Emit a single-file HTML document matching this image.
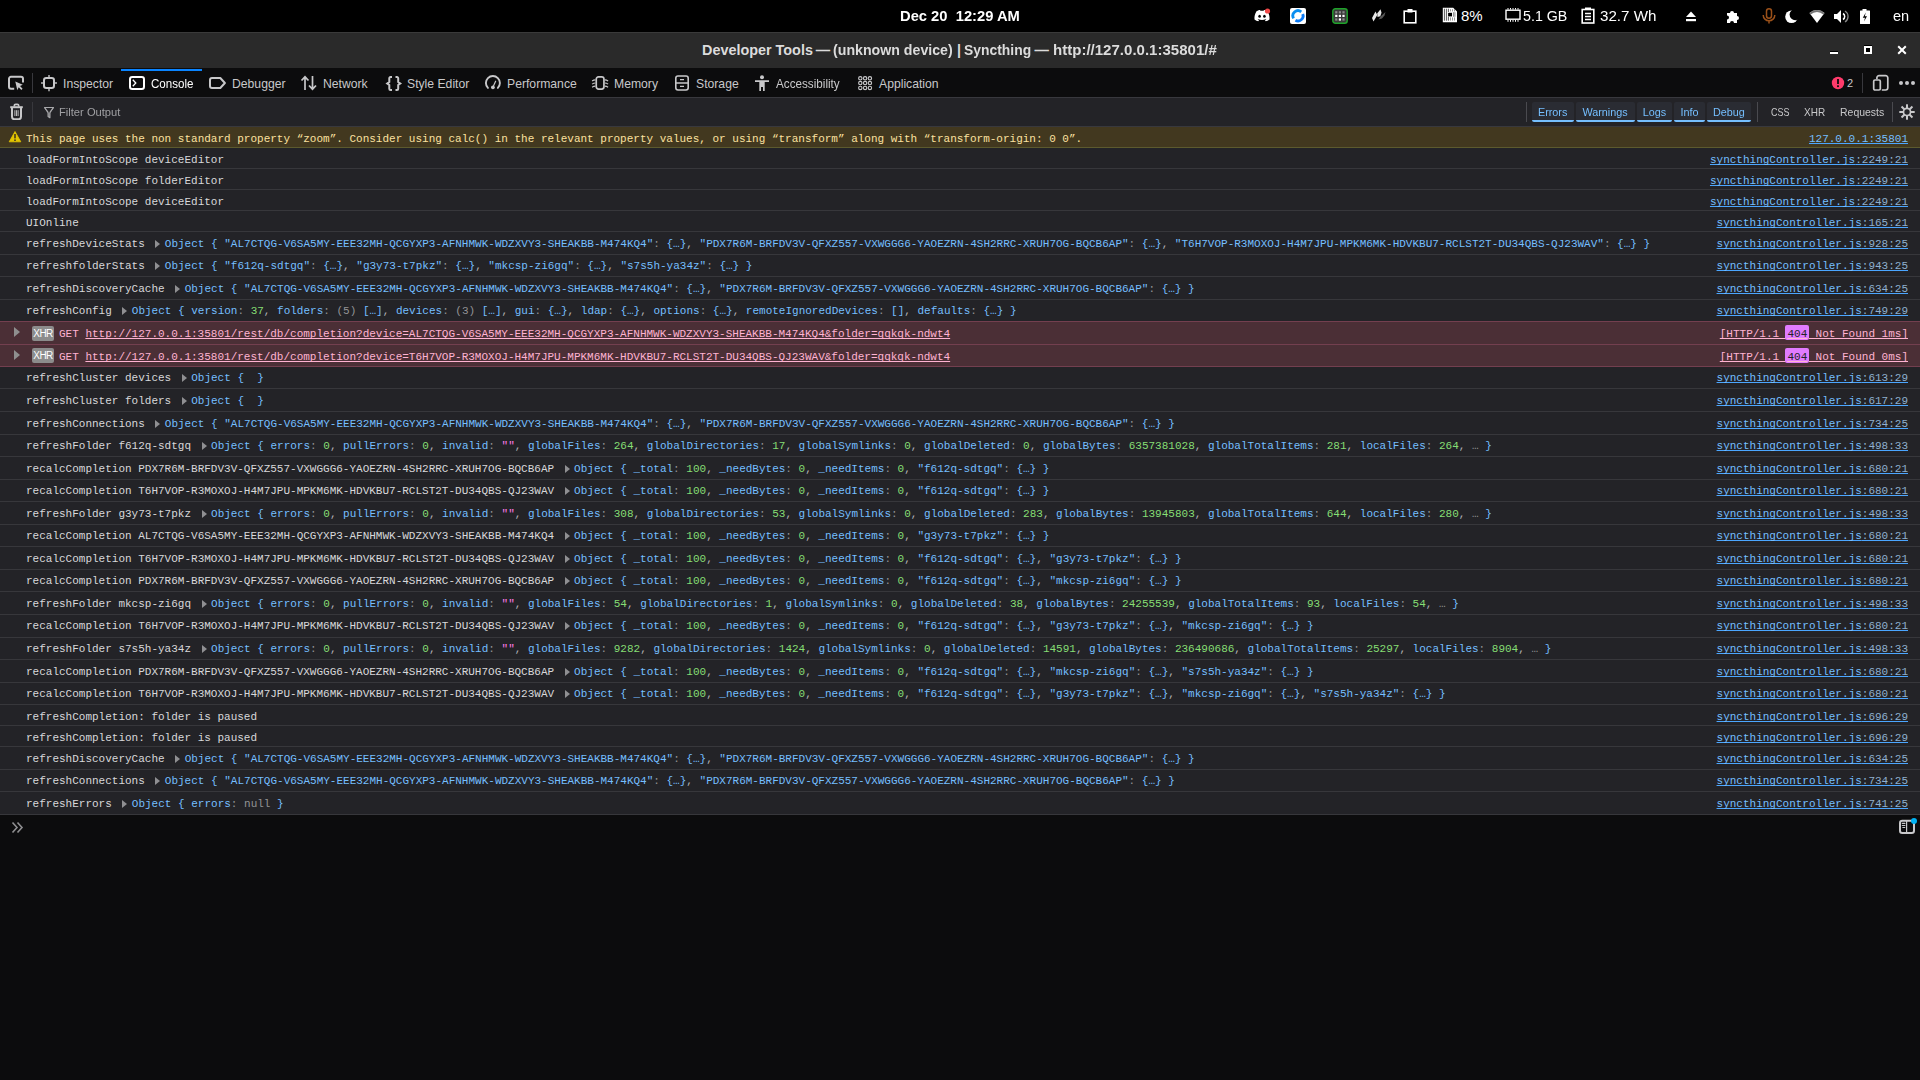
<!DOCTYPE html><html><head><meta charset="utf-8"><style>
*{margin:0;padding:0;box-sizing:border-box}
html,body{width:1920px;height:1080px;overflow:hidden;background:#0c0c0d;font-family:"Liberation Sans",sans-serif}
.abs{position:absolute}
#top{left:0;top:0;width:1920px;height:32px;background:#000}
#clock{left:899.5px;top:0;height:32px;line-height:32px;color:#fff;font-weight:bold;font-size:15px;white-space:pre;transform:scaleX(0.982);transform-origin:0 0}
#title{left:0;top:32px;width:1920px;height:36px;background:#2a2a2a;border-top:1px solid #3a3a3a}
.tt{top:-1px;height:36px;line-height:36px;color:#dcdcdc;font-weight:bold;font-size:14.4px;white-space:pre;transform-origin:0 0}
#tabs{left:0;top:68px;width:1920px;height:29px;background:#0c0c0d}
.tab{top:2px;height:28px;line-height:29px;font-size:12.2px;color:#c8c8ca;white-space:pre}
#filter{left:0;top:97px;width:1920px;height:30px;background:#232327;border-top:1px solid #38383d;border-bottom:1px solid #38383d}
.fb{font-size:11.5px;white-space:pre;line-height:14px}
.row{left:0;width:1920px;background:#232327;border-bottom:1px solid #37373b}
.msg{position:absolute;left:26px;font-family:"Liberation Mono",monospace;font-size:11px;white-space:pre;color:#d8d8da;line-height:14px}
.lnk{position:absolute;right:12px;font-family:"Liberation Mono",monospace;font-size:11px;white-space:pre;line-height:14px;text-decoration:underline;text-decoration-color:#4ba6ff;text-decoration-skip-ink:none}
.lnk b{font-weight:normal;color:#75bfff}
.lnk u{text-decoration:none;color:#8fb0cf}
i{font-style:normal}
i.o{color:#75bfff}
i.p{color:#939395}
i.c{color:#b1b1b3}
i.n{color:#86de74}
i.s{color:#ff7de9}
i.g{color:#939395}
.tw{display:inline-block;width:13.4px;height:8px;position:relative}
.tw:after{content:"";position:absolute;left:3.9px;top:1px;border-left:5px solid #8f8f92;border-top:4px solid transparent;border-bottom:4px solid transparent}
#warn{left:0;top:127px;width:1920px;height:21px;background:#42381f;border-bottom:1px solid #5c5a2e}
#warn .msg{color:#fce19f}
.traytxt{top:0;height:32px;line-height:31px;color:#fff;font-size:15px;white-space:pre;transform-origin:0 0}
.fbtn{top:4px;height:20px;background:#2a2c33;border-radius:2px;color:#75bfff;font-size:11.5px;text-align:center;line-height:21px;border-bottom:2px solid #75bfff}
.xtw{position:absolute;left:14px;top:5px;border-left:6px solid #8f8f8f;border-top:5px solid transparent;border-bottom:5px solid transparent}
.xhr{position:absolute;left:32px;top:4px;width:22px;height:15px;background:#8c8c8c;border-radius:2px;color:#fff;font-size:10px;line-height:15px;text-align:center;letter-spacing:-0.6px}
.url{text-decoration:underline;text-decoration-skip-ink:none}
.xl{color:#ffb3d2;text-decoration-color:#ffb3d2}
.b404{background:#e17bff;color:#232327;border-radius:2px;padding:3px 2.2px 0 2.2px;margin:0 -0.5px;text-decoration:underline;text-decoration-color:#ffb3d2}
#warn .lnk{color:#75bfff}
.err{background:#4b2f36;border-bottom:1px solid #733f4f}
#input{left:0;top:815px;width:1920px;height:265px;background:#0c0c0d}
</style></head><body><div id="top" class="abs"><div id="clock" class="abs">Dec 20&nbsp; 12:29 AM</div><svg class="abs" style="left:1253px;top:8px" width="19" height="15" viewBox="0 0 19 15" ><path d="M3.5 3.2C5 2.3 6.3 2 7 2l.4.8c1-.2 2.2-.2 3.2 0L11 2c.7 0 2 .3 3.5 1.2 1.6 2.6 2.3 5.3 2 8.2-1.3 1-2.6 1.6-3.8 1.9l-.8-1.3c.5-.2 1-.4 1.4-.7l-.3-.2c-2.6 1.2-5.4 1.2-8 0l-.3.2c.4.3.9.5 1.4.7l-.8 1.3C4.1 13 2.8 12.4 1.5 11.4c-.3-2.9.4-5.6 2-8.2z" fill="#fff"/><ellipse cx="6.6" cy="8.3" rx="1.3" ry="1.5" fill="#000"/><ellipse cx="11.4" cy="8.3" rx="1.3" ry="1.5" fill="#000"/><circle cx="14.5" cy="3" r="2.6" fill="#f04747"/></svg><svg class="abs" style="left:1290px;top:8px" width="16" height="16" viewBox="0 0 16 16" ><rect x="0" y="0" width="16" height="16" rx="2" fill="#fff"/><path d="M3.58 10.35A5.1 5.1 0 0 1 11.28 3.89" fill="none" stroke="#0a8ef0" stroke-width="2.8"/><path d="M12.79 6.06A5.1 5.1 0 0 1 5.45 12.22" fill="none" stroke="#0a7af5" stroke-width="2.8"/></svg><svg class="abs" style="left:1332px;top:8px" width="16" height="16" viewBox="0 0 16 16" ><rect x="0.8" y="0.8" width="14.4" height="14.4" rx="2.5" fill="#3a3a3a" stroke="#1fa32a" stroke-width="1.4"/><rect x="3.2" y="3.2" width="2.2" height="2.2" fill="#8a8a8a"/><rect x="3.2" y="6.800000000000001" width="2.2" height="2.2" fill="#fff"/><rect x="3.2" y="10.4" width="2.2" height="2.2" fill="#8a8a8a"/><rect x="6.800000000000001" y="3.2" width="2.2" height="2.2" fill="#8a8a8a"/><rect x="6.800000000000001" y="6.800000000000001" width="2.2" height="2.2" fill="#fff"/><rect x="6.800000000000001" y="10.4" width="2.2" height="2.2" fill="#fff"/><rect x="10.4" y="3.2" width="2.2" height="2.2" fill="#8a8a8a"/><rect x="10.4" y="6.800000000000001" width="2.2" height="2.2" fill="#fff"/><rect x="10.4" y="10.4" width="2.2" height="2.2" fill="#8a8a8a"/></svg><svg class="abs" style="left:1371px;top:8px" width="16" height="15" viewBox="0 0 16 15" ><path d="M7.5 11.5L9.5 8.5 14.5 4 13.5 7.5 11 10.5z" fill="#555"/><path d="M2.5 13.5L1 10 4.5 3.5 6.3 7z" fill="#e8e8e8"/><path d="M6.5 9L6.3 5.2 9.5 1.2 10.5 4.8 9.3 8.3z" fill="#e8e8e8"/></svg><svg class="abs" style="left:1403px;top:8px" width="14" height="16" viewBox="0 0 14 16" ><rect x="1.2" y="3.2" width="11.6" height="11.6" fill="none" stroke="#fff" stroke-width="1.6"/><rect x="4.5" y="1" width="5" height="3.5" fill="#fff"/></svg><svg class="abs" style="left:1442px;top:7px" width="16" height="16" viewBox="0 0 16 16" ><path d="M0.8 0.8H11.2L15 4.6V15.2H0.8z" fill="#fff"/><rect x="1.9" y="1.7" width="1" height="12" fill="#5a5a5a"/><rect x="3.9" y="1.7" width="1" height="12" fill="#5a5a5a"/><rect x="5.9" y="1.7" width="1" height="12" fill="#5a5a5a"/><rect x="8.0" y="2.2" width="1" height="2.2" fill="#9a9a9a"/><rect x="8.0" y="10.4" width="1" height="3.2" fill="#9a9a9a"/><rect x="10.0" y="2.2" width="1" height="2.2" fill="#9a9a9a"/><rect x="10.0" y="10.4" width="1" height="3.2" fill="#9a9a9a"/><rect x="12.0" y="2.2" width="1" height="2.2" fill="#9a9a9a"/><rect x="12.0" y="10.4" width="1" height="3.2" fill="#9a9a9a"/><rect x="10.9" y="5.2" width="1" height="4.6" fill="#8a8a8a"/><rect x="12.4" y="5.2" width="1" height="4.6" fill="#8a8a8a"/><rect x="5.6" y="5.0" width="4.9" height="4.7" fill="#fff"/><rect x="6.1" y="5.8" width="3.9" height="3.6" fill="#000"/></svg><div class="abs traytxt" style="left:1461px">8%</div><svg class="abs" style="left:1505px;top:7px" width="16" height="16" viewBox="0 0 16 16" ><rect x="1" y="3.2" width="14" height="9" fill="none" stroke="#fff" stroke-width="1.4"/><path d="M3 1v1.6M5.5 1v1.6M8 1v1.6M10.5 1v1.6M13 1v1.6M3 13v1.8M5.5 13v1.8M8 13v1.8M10.5 13v1.8M13 13v1.8" stroke="#fff" stroke-width="1"/></svg><div class="abs traytxt" style="left:1523px;transform:scaleX(0.95)">5.1 GB</div><svg class="abs" style="left:1581px;top:7px" width="14" height="17" viewBox="0 0 14 17" ><rect x="1.2" y="2.5" width="11.6" height="13.5" fill="none" stroke="#fff" stroke-width="1.6"/><rect x="4" y="0.5" width="6" height="2" fill="#fff"/><path d="M4 6.5h6M4 9.5h6M4 12.5h6" stroke="#fff" stroke-width="1.6"/></svg><div class="abs traytxt" style="left:1600px;transform:scaleX(1.01)">32.7 Wh</div><svg class="abs" style="left:1685px;top:11px" width="12" height="11" viewBox="0 0 12 11" ><path d="M6 0.5L11 6H1z" fill="#fff"/><rect x="1" y="8" width="10" height="2.2" fill="#fff"/></svg><svg class="abs" style="left:1725px;top:8px" width="16" height="16" viewBox="0 0 16 16" ><path d="M2 5h3a2 2 0 1 1 4 0h3v3a2 2 0 1 1 0 4v3H9a2 2 0 1 0-4 0H2v-3.5a2 2 0 1 0 0-4z" fill="#fff"/></svg><svg class="abs" style="left:1762px;top:8px" width="14" height="16" viewBox="0 0 14 16" ><rect x="4.5" y="0.8" width="5" height="9.5" rx="2.5" fill="none" stroke="#9a5019" stroke-width="1.5"/><path d="M1.2 7a5.8 5.8 0 0 0 11.6 0M7 12.8V15.5" fill="none" stroke="#9a5019" stroke-width="1.5"/></svg><svg class="abs" style="left:1785px;top:9px" width="14" height="15" viewBox="0 0 14 15" ><defs><mask id="moonm"><rect width="14" height="15" fill="#fff"/><circle cx="10.2" cy="5.6" r="5.6" fill="#000"/></mask></defs><circle cx="6.5" cy="7.8" r="6.3" fill="#fff" mask="url(#moonm)"/></svg><svg class="abs" style="left:1809px;top:9px" width="16" height="15" viewBox="0 0 16 15" ><path d="M8 14L0.5 4A11 11 0 0 1 15.5 4z" fill="#fff"/><path d="M0.5 4A11 11 0 0 1 15.5 4L14.3 5.6A9 9 0 0 0 1.7 5.6z" fill="#777"/></svg><svg class="abs" style="left:1833px;top:9px" width="16" height="15" viewBox="0 0 16 15" ><path d="M1 5h3l4-4v13L4 10H1z" fill="#fff"/><path d="M10 4.5a3.5 3.5 0 0 1 0 6" fill="none" stroke="#fff" stroke-width="1.5"/><path d="M12 2a6.5 6.5 0 0 1 0 11" fill="none" stroke="#888" stroke-width="1.3"/></svg><svg class="abs" style="left:1859px;top:9px" width="12" height="15" viewBox="0 0 12 15" ><rect x="3.5" y="0" width="4" height="2" fill="#fff"/><rect x="1" y="1.5" width="10" height="13.5" rx="0.5" fill="#fff"/><path d="M6.8 3.5L3.8 8.8h2.2l-1 3.8 3-5.3H5.8z" fill="#000"/></svg><div class="abs traytxt" style="left:1892.5px;transform:scaleX(0.97)">en</div></div><div id="title" class="abs"><div class="abs tt" style="left:702.0px;transform:scaleX(1.0)">Developer Tools</div><div class="abs tt" style="left:815.8px;transform:scaleX(1.0)">—</div><div class="abs tt" style="left:833.4px;transform:scaleX(0.985)">(unknown device)</div><div class="abs tt" style="left:957.0px;transform:scaleX(1.0)">|</div><div class="abs tt" style="left:964.0px;transform:scaleX(0.965)">Syncthing</div><div class="abs tt" style="left:1034.6px;transform:scaleX(1.0)">—</div><div class="abs tt" style="left:1052.9px;transform:scaleX(1.045)">http://127.0.0.1:35801/#</div><div class="abs" style="left:1830px;top:18px;width:8px;height:1px;background:#000"></div><div class="abs" style="left:1830px;top:19px;width:8px;height:2px;background:#fff"></div><div class="abs" style="left:1864px;top:12px;width:8px;height:1px;background:#000"></div><div class="abs" style="left:1864px;top:13px;width:8px;height:8px;border:2px solid #fff;background:#000"></div><svg class="abs" style="left:1897px;top:12px" width="10" height="10" viewBox="0 0 10 10" ><path d="M1.2 1.2l7.6 7.6M8.8 1.2L1.2 8.8" stroke="#fff" stroke-width="2"/></svg></div><div id="tabs" class="abs"><div class="abs" style="left:121px;top:1px;width:81px;height:2px;background:#0a84ff"></div><svg class="abs" style="left:7px;top:7px" width="18" height="17" viewBox="0 0 18 17" ><path d="M7.2 13.8H4a2 2 0 0 1-2-2V3.8a2 2 0 0 1 2-2h10a2 2 0 0 1 2 2v3.7" fill="none" stroke="#c8c8ca" stroke-width="2"/><path d="M8.3 6.6L15.8 9.8 13 11 15.6 13.7 14.3 15 11.7 12.3 10.3 15.2z" fill="#c8c8ca"/></svg><div class="abs" style="left:32px;top:5px;width:1px;height:20px;background:#38383d"></div><svg class="abs" style="left:41px;top:7px" width="16" height="17" viewBox="0 0 16 17" ><rect x="3" y="3" width="10" height="10" rx="2.2" fill="none" stroke="#c8c8ca" stroke-width="2"/><path d="M8 0v2M8 14v2.2M0 8h2M14 8h2" stroke="#8e8e90" stroke-width="2"/></svg><div class="abs tab" style="left:63px">Inspector</div><svg class="abs" style="left:129px;top:8px" width="16" height="14" viewBox="0 0 16 14" ><rect x="1" y="1" width="14" height="12" rx="2.3" fill="none" stroke="#fff" stroke-width="2"/><path d="M3.8 3.8l3 3.2-3 3.2" fill="none" stroke="#fff" stroke-width="1.3"/></svg><div class="abs tab" style="left:151px;color:#fff;transform:scaleX(0.95);transform-origin:0 0">Console</div><svg class="abs" style="left:209px;top:9px" width="18" height="13" viewBox="0 0 18 13" ><path d="M3 1h8.3l4.6 5-4.6 5H3a2 2 0 0 1-2-2V3a2 2 0 0 1 2-2z" fill="none" stroke="#c8c8ca" stroke-width="2" stroke-linejoin="round"/></svg><div class="abs tab" style="left:232px">Debugger</div><svg class="abs" style="left:300px;top:7px" width="18" height="16" viewBox="0 0 18 16" ><path d="M5 15V2M1.5 5.5L5 1.8l3.5 3.7M12.5 1v13M9 10.5l3.5 3.7 3.5-3.7" fill="none" stroke="#c8c8ca" stroke-width="1.7"/></svg><div class="abs tab" style="left:323px">Network</div><svg class="abs" style="left:385px;top:8px" width="18" height="15" viewBox="0 0 18 15" ><path d="M7 1H5.5a1.2 1.2 0 0 0-1.2 1.2V6L2.2 7.5 4.3 9v3.8A1.2 1.2 0 0 0 5.5 14H7M10.5 1H12a1.2 1.2 0 0 1 1.2 1.2V6l2.1 1.5L13.2 9v3.8A1.2 1.2 0 0 1 12 14h-1.5" fill="none" stroke="#c8c8ca" stroke-width="2"/></svg><div class="abs tab" style="left:407px">Style Editor</div><svg class="abs" style="left:484px;top:7px" width="18" height="17" viewBox="0 0 18 17" ><path d="M3.95 12.95A7 7 0 1 1 13.85 12.95" fill="none" stroke="#c8c8ca" stroke-width="1.9" stroke-linecap="round"/><path d="M8.9 12.2L11.6 6.2" stroke="#c8c8ca" stroke-width="1.2" stroke-linecap="round"/><circle cx="8.9" cy="12.3" r="1.9" fill="#c8c8ca"/></svg><div class="abs tab" style="left:507px">Performance</div><svg class="abs" style="left:591px;top:7px" width="18" height="17" viewBox="0 0 18 17" ><rect x="5.25" y="1.85" width="7.7" height="12.2" rx="2.3" fill="none" stroke="#c8c8ca" stroke-width="1.7"/><path d="M4.4 4.9Q2.6 4.9 1.1 6.0M13.8 4.9Q15.6 4.9 17.1 6.0M4.4 8.0Q2.6 8.0 1.1 9.1M13.8 8.0Q15.6 8.0 17.1 9.1M4.4 11.1Q2.6 11.1 1.1 12.2M13.8 11.1Q15.6 11.1 17.1 12.2" fill="none" stroke="#c8c8ca" stroke-width="1.1"/></svg><div class="abs tab" style="left:614px">Memory</div><svg class="abs" style="left:674px;top:7px" width="16" height="16" viewBox="0 0 16 16" ><rect x="1.8" y="1" width="12.4" height="14" rx="2.2" fill="none" stroke="#c8c8ca" stroke-width="1.6"/><path d="M1.8 8h12.4M6 4.6h4M6 11.4h4" stroke="#c8c8ca" stroke-width="1.4"/></svg><div class="abs tab" style="left:696px">Storage</div><svg class="abs" style="left:754px;top:7px" width="16" height="16" viewBox="0 0 16 16" ><circle cx="8" cy="2.2" r="2" fill="#c8c8ca"/><path d="M1 5.3h14v1.8h-4.3V16H9V12H7v4H5.3V7.1H1z" fill="#c8c8ca"/></svg><div class="abs tab" style="left:776px;transform:scaleX(0.96);transform-origin:0 0">Accessibility</div><svg class="abs" style="left:858px;top:8px" width="15" height="15" viewBox="0 0 15 15" ><circle cx="2.3" cy="2.3" r="1.7" fill="none" stroke="#c8c8ca" stroke-width="1.1"/><circle cx="2.3" cy="7.1" r="1.7" fill="none" stroke="#c8c8ca" stroke-width="1.1"/><circle cx="2.3" cy="11.899999999999999" r="1.7" fill="none" stroke="#c8c8ca" stroke-width="1.1"/><circle cx="7.1" cy="2.3" r="1.7" fill="none" stroke="#c8c8ca" stroke-width="1.1"/><circle cx="7.1" cy="7.1" r="1.7" fill="none" stroke="#c8c8ca" stroke-width="1.1"/><circle cx="7.1" cy="11.899999999999999" r="1.7" fill="none" stroke="#c8c8ca" stroke-width="1.1"/><circle cx="11.899999999999999" cy="2.3" r="1.7" fill="none" stroke="#c8c8ca" stroke-width="1.1"/><circle cx="11.899999999999999" cy="7.1" r="1.7" fill="none" stroke="#c8c8ca" stroke-width="1.1"/><circle cx="11.899999999999999" cy="11.899999999999999" r="1.7" fill="none" stroke="#c8c8ca" stroke-width="1.1"/></svg><div class="abs tab" style="left:879px">Application</div><svg class="abs" style="left:1831px;top:8px" width="14" height="14" viewBox="0 0 14 14" ><circle cx="7" cy="7" r="6.2" fill="#ff3b6b"/><path d="M7 3v5" stroke="#0c0c0d" stroke-width="1.8"/><rect x="6.1" y="9.3" width="1.8" height="1.8" fill="#0c0c0d"/></svg><div class="abs tab" style="left:1847px;top:1px;color:#c8c8ca;font-size:11px">2</div><div class="abs" style="left:1862px;top:5px;width:1px;height:20px;background:#38383d"></div><svg class="abs" style="left:1872px;top:6px" width="17" height="17" viewBox="0 0 17 17" ><rect x="1.7" y="6" width="6.6" height="10" rx="1.3" fill="none" stroke="#c8c8ca" stroke-width="1.7"/><path d="M4.9 5.2V3.8a2.2 2.2 0 0 1 2.2-2.2h6.5a2.2 2.2 0 0 1 2.2 2.2v10a2.2 2.2 0 0 1-2.2 2.2H9.8" fill="none" stroke="#c8c8ca" stroke-width="1.7"/></svg><svg class="abs" style="left:1898px;top:12px" width="18" height="6" viewBox="0 0 18 6" ><circle cx="3" cy="3" r="2" fill="#c8c8ca"/><circle cx="9" cy="3" r="2" fill="#c8c8ca"/><circle cx="15" cy="3" r="2" fill="#c8c8ca"/></svg></div><div id="filter" class="abs"><svg class="abs" style="left:9px;top:5px" width="15" height="17" viewBox="0 0 15 17" ><path d="M1.2 4.2h12.6" stroke="#c8c8ca" stroke-width="2"/><path d="M5.2 3.6V3a1.6 1.6 0 0 1 1.6-1.6h1.4A1.6 1.6 0 0 1 9.8 3v0.6" fill="none" stroke="#c8c8ca" stroke-width="1.6"/><path d="M3 5v8.8a2.4 2.4 0 0 0 2.4 2.4h4.2a2.4 2.4 0 0 0 2.4-2.4V5" fill="none" stroke="#c8c8ca" stroke-width="2"/><path d="M5.9 7.2v5.8M7.5 7.2v5.8M9.1 7.2v5.8" stroke="#c8c8ca" stroke-width="0.9"/></svg><div class="abs" style="left:32px;top:4px;width:1px;height:20px;background:#38383d"></div><svg class="abs" style="left:43px;top:8px" width="12" height="13" viewBox="0 0 12 13" ><path d="M1.6 1.5h8.8L6.9 6.3v5.4L5.1 10.6V6.3z" fill="#5a5a5e" stroke="#a8a8ab" stroke-width="1.2" stroke-linejoin="round"/><path d="M1.6 1.5h8.8L6.9 6.3H5.1z" fill="#232327"/><path d="M1.6 1.5h8.8L6.9 6.3" fill="none" stroke="#a8a8ab" stroke-width="1.2" stroke-linejoin="round"/><path d="M1.6 1.5L5.1 6.3" stroke="#a8a8ab" stroke-width="1.2"/></svg><div class="abs fb" style="left:58.5px;top:7px;color:#a0a0a3;transform:scaleX(0.97);transform-origin:0 0">Filter Output</div><div class="abs" style="left:1526px;top:4px;width:1px;height:20px;background:#4a4a4f"></div><div class="abs fbtn" style="left:1532px;width:42px"><span style="display:inline-block;transform:scaleX(0.94)">Errors</span></div><div class="abs fbtn" style="left:1576px;width:59px"><span style="display:inline-block;transform:scaleX(0.94)">Warnings</span></div><div class="abs fbtn" style="left:1637px;width:35px"><span style="display:inline-block;transform:scaleX(0.94)">Logs</span></div><div class="abs fbtn" style="left:1674px;width:31px"><span style="display:inline-block;transform:scaleX(0.94)">Info</span></div><div class="abs fbtn" style="left:1707px;width:44px"><span style="display:inline-block;transform:scaleX(0.94)">Debug</span></div><div class="abs" style="left:1757px;top:4px;width:1px;height:20px;background:#4a4a4f"></div><div class="abs fb" style="left:1770.5px;top:7px;color:#c8c8ca;transform:scaleX(0.78);transform-origin:0 0">CSS</div><div class="abs fb" style="left:1804px;top:7px;color:#c8c8ca;transform:scaleX(0.87);transform-origin:0 0">XHR</div><div class="abs fb" style="left:1839.5px;top:7px;color:#c8c8ca;transform:scaleX(0.91);transform-origin:0 0">Requests</div><div class="abs" style="left:1892px;top:4px;width:1px;height:20px;background:#4a4a4f"></div><svg class="abs" style="left:1899px;top:6px" width="16" height="16" viewBox="0 0 16 16" ><rect x="7" y="0.3" width="2" height="15.4" fill="#c8c8ca" transform="rotate(0 8 8)"/><rect x="7" y="0.3" width="2" height="15.4" fill="#c8c8ca" transform="rotate(45 8 8)"/><rect x="7" y="0.3" width="2" height="15.4" fill="#c8c8ca" transform="rotate(90 8 8)"/><rect x="7" y="0.3" width="2" height="15.4" fill="#c8c8ca" transform="rotate(135 8 8)"/><circle cx="8" cy="8" r="4.4" fill="#c8c8ca"/><circle cx="8" cy="8" r="2.7" fill="#232327"/></svg></div><div id="warn" class="abs"><svg class="abs" style="left:8px;top:3px" width="14" height="13" viewBox="0 0 14 13"><path d="M7 1.5L12.8 11.8H1.2z" fill="#e3c500" stroke="#e3c500" stroke-width="0.8" stroke-linejoin="round"/><rect x="6.2" y="4" width="1.6" height="4.4" fill="#42381f"/><rect x="6.2" y="9.4" width="1.6" height="1.6" fill="#42381f"/></svg><div class="msg" style="top:5px">This page uses the non standard property “zoom”. Consider using calc() in the relevant property values, or using “transform” along with “transform-origin: 0 0”.</div><div class="lnk" style="top:5px"><b>127.0.0.1:35801</b></div></div><div class="abs row" style="top:148px;height:21px"><div class="msg" style="top:5px">loadFormIntoScope deviceEditor</div><div class="lnk" style="top:5px"><b>syncthingController.js</b><u>:2249:21</u></div></div><div class="abs row" style="top:169px;height:21px"><div class="msg" style="top:5px">loadFormIntoScope folderEditor</div><div class="lnk" style="top:5px"><b>syncthingController.js</b><u>:2249:21</u></div></div><div class="abs row" style="top:190px;height:21px"><div class="msg" style="top:5px">loadFormIntoScope deviceEditor</div><div class="lnk" style="top:5px"><b>syncthingController.js</b><u>:2249:21</u></div></div><div class="abs row" style="top:211px;height:21px"><div class="msg" style="top:5px">UIOnline</div><div class="lnk" style="top:5px"><b>syncthingController.js</b><u>:165:21</u></div></div><div class="abs row" style="top:232px;height:23px"><div class="msg" style="top:5px">refreshDeviceStats <span class="tw"></span><i class="o">Object { </i><i class="o">"AL7CTQG-V6SA5MY-EEE32MH-QCGYXP3-AFNHMWK-WDZXVY3-SHEAKBB-M474KQ4"</i><i class="p">: </i><i class="o">{…}</i><i class="c">, </i><i class="o">"PDX7R6M-BRFDV3V-QFXZ557-VXWGGG6-YAOEZRN-4SH2RRC-XRUH7OG-BQCB6AP"</i><i class="p">: </i><i class="o">{…}</i><i class="c">, </i><i class="o">"T6H7VOP-R3MOXOJ-H4M7JPU-MPKM6MK-HDVKBU7-RCLST2T-DU34QBS-QJ23WAV"</i><i class="p">: </i><i class="o">{…}</i><i class="o"> }</i></div><div class="lnk" style="top:5px"><b>syncthingController.js</b><u>:928:25</u></div></div><div class="abs row" style="top:255px;height:22px"><div class="msg" style="top:4px">refreshfolderStats <span class="tw"></span><i class="o">Object { </i><i class="o">"f612q-sdtgq"</i><i class="p">: </i><i class="o">{…}</i><i class="c">, </i><i class="o">"g3y73-t7pkz"</i><i class="p">: </i><i class="o">{…}</i><i class="c">, </i><i class="o">"mkcsp-zi6gq"</i><i class="p">: </i><i class="o">{…}</i><i class="c">, </i><i class="o">"s7s5h-ya34z"</i><i class="p">: </i><i class="o">{…}</i><i class="o"> }</i></div><div class="lnk" style="top:4px"><b>syncthingController.js</b><u>:943:25</u></div></div><div class="abs row" style="top:277px;height:23px"><div class="msg" style="top:5px">refreshDiscoveryCache <span class="tw"></span><i class="o">Object { </i><i class="o">"AL7CTQG-V6SA5MY-EEE32MH-QCGYXP3-AFNHMWK-WDZXVY3-SHEAKBB-M474KQ4"</i><i class="p">: </i><i class="o">{…}</i><i class="c">, </i><i class="o">"PDX7R6M-BRFDV3V-QFXZ557-VXWGGG6-YAOEZRN-4SH2RRC-XRUH7OG-BQCB6AP"</i><i class="p">: </i><i class="o">{…}</i><i class="o"> }</i></div><div class="lnk" style="top:5px"><b>syncthingController.js</b><u>:634:25</u></div></div><div class="abs row" style="top:300px;height:22px;border-bottom-color:#733f4f"><div class="msg" style="top:4px">refreshConfig <span class="tw"></span><i class="o">Object { </i><i class="o">version</i><i class="p">: </i><i class="n">37</i><i class="c">, </i><i class="o">folders</i><i class="p">: </i><i class="g">(5)</i><i class="o"> […]</i><i class="c">, </i><i class="o">devices</i><i class="p">: </i><i class="g">(3)</i><i class="o"> […]</i><i class="c">, </i><i class="o">gui</i><i class="p">: </i><i class="o">{…}</i><i class="c">, </i><i class="o">ldap</i><i class="p">: </i><i class="o">{…}</i><i class="c">, </i><i class="o">options</i><i class="p">: </i><i class="o">{…}</i><i class="c">, </i><i class="o">remoteIgnoredDevices</i><i class="p">: </i><i class="o">[]</i><i class="c">, </i><i class="o">defaults</i><i class="p">: </i><i class="o">{…}</i><i class="o"> }</i></div><div class="lnk" style="top:4px"><b>syncthingController.js</b><u>:749:29</u></div></div><div class="abs row err" style="top:322px;height:23px"><span class="xtw"></span><span class="xhr" style="top:4px">XHR</span><div class="msg" style="top:5px;left:59px;color:#ffb3d2">GET <span class="url">http://127.0.0.1:35801/rest/db/completion?device=AL7CTQG-V6SA5MY-EEE32MH-QCGYXP3-AFNHMWK-WDZXVY3-SHEAKBB-M474KQ4&amp;folder=qqkqk-ndwt4</span></div><div class="lnk xl" style="top:5px">[HTTP/1.1 <span class="b404">404</span> Not Found 1ms]</div></div><div class="abs row err" style="top:345px;height:22px"><span class="xtw"></span><span class="xhr" style="top:3px">XHR</span><div class="msg" style="top:5px;left:59px;color:#ffb3d2">GET <span class="url">http://127.0.0.1:35801/rest/db/completion?device=T6H7VOP-R3MOXOJ-H4M7JPU-MPKM6MK-HDVKBU7-RCLST2T-DU34QBS-QJ23WAV&amp;folder=qqkqk-ndwt4</span></div><div class="lnk xl" style="top:5px">[HTTP/1.1 <span class="b404">404</span> Not Found 0ms]</div></div><div class="abs row" style="top:367px;height:22px"><div class="msg" style="top:4px">refreshCluster devices <span class="tw"></span><i class="o">Object {  }</i></div><div class="lnk" style="top:4px"><b>syncthingController.js</b><u>:613:29</u></div></div><div class="abs row" style="top:389px;height:23px"><div class="msg" style="top:5px">refreshCluster folders <span class="tw"></span><i class="o">Object {  }</i></div><div class="lnk" style="top:5px"><b>syncthingController.js</b><u>:617:29</u></div></div><div class="abs row" style="top:412px;height:23px"><div class="msg" style="top:5px">refreshConnections <span class="tw"></span><i class="o">Object { </i><i class="o">"AL7CTQG-V6SA5MY-EEE32MH-QCGYXP3-AFNHMWK-WDZXVY3-SHEAKBB-M474KQ4"</i><i class="p">: </i><i class="o">{…}</i><i class="c">, </i><i class="o">"PDX7R6M-BRFDV3V-QFXZ557-VXWGGG6-YAOEZRN-4SH2RRC-XRUH7OG-BQCB6AP"</i><i class="p">: </i><i class="o">{…}</i><i class="o"> }</i></div><div class="lnk" style="top:5px"><b>syncthingController.js</b><u>:734:25</u></div></div><div class="abs row" style="top:435px;height:22px"><div class="msg" style="top:4px">refreshFolder f612q-sdtgq <span class="tw"></span><i class="o">Object { </i><i class="o">errors</i><i class="p">: </i><i class="n">0</i><i class="c">, </i><i class="o">pullErrors</i><i class="p">: </i><i class="n">0</i><i class="c">, </i><i class="o">invalid</i><i class="p">: </i><i class="s">""</i><i class="c">, </i><i class="o">globalFiles</i><i class="p">: </i><i class="n">264</i><i class="c">, </i><i class="o">globalDirectories</i><i class="p">: </i><i class="n">17</i><i class="c">, </i><i class="o">globalSymlinks</i><i class="p">: </i><i class="n">0</i><i class="c">, </i><i class="o">globalDeleted</i><i class="p">: </i><i class="n">0</i><i class="c">, </i><i class="o">globalBytes</i><i class="p">: </i><i class="n">6357381028</i><i class="c">, </i><i class="o">globalTotalItems</i><i class="p">: </i><i class="n">281</i><i class="c">, </i><i class="o">localFiles</i><i class="p">: </i><i class="n">264</i><i class="c">, </i><i class="g">…</i><i class="o"> }</i></div><div class="lnk" style="top:4px"><b>syncthingController.js</b><u>:498:33</u></div></div><div class="abs row" style="top:457px;height:23px"><div class="msg" style="top:5px">recalcCompletion PDX7R6M-BRFDV3V-QFXZ557-VXWGGG6-YAOEZRN-4SH2RRC-XRUH7OG-BQCB6AP <span class="tw"></span><i class="o">Object { </i><i class="o">_total</i><i class="p">: </i><i class="n">100</i><i class="c">, </i><i class="o">_needBytes</i><i class="p">: </i><i class="n">0</i><i class="c">, </i><i class="o">_needItems</i><i class="p">: </i><i class="n">0</i><i class="c">, </i><i class="o">"f612q-sdtgq"</i><i class="p">: </i><i class="o">{…}</i><i class="o"> }</i></div><div class="lnk" style="top:5px"><b>syncthingController.js</b><u>:680:21</u></div></div><div class="abs row" style="top:480px;height:22px"><div class="msg" style="top:4px">recalcCompletion T6H7VOP-R3MOXOJ-H4M7JPU-MPKM6MK-HDVKBU7-RCLST2T-DU34QBS-QJ23WAV <span class="tw"></span><i class="o">Object { </i><i class="o">_total</i><i class="p">: </i><i class="n">100</i><i class="c">, </i><i class="o">_needBytes</i><i class="p">: </i><i class="n">0</i><i class="c">, </i><i class="o">_needItems</i><i class="p">: </i><i class="n">0</i><i class="c">, </i><i class="o">"f612q-sdtgq"</i><i class="p">: </i><i class="o">{…}</i><i class="o"> }</i></div><div class="lnk" style="top:4px"><b>syncthingController.js</b><u>:680:21</u></div></div><div class="abs row" style="top:502px;height:23px"><div class="msg" style="top:5px">refreshFolder g3y73-t7pkz <span class="tw"></span><i class="o">Object { </i><i class="o">errors</i><i class="p">: </i><i class="n">0</i><i class="c">, </i><i class="o">pullErrors</i><i class="p">: </i><i class="n">0</i><i class="c">, </i><i class="o">invalid</i><i class="p">: </i><i class="s">""</i><i class="c">, </i><i class="o">globalFiles</i><i class="p">: </i><i class="n">308</i><i class="c">, </i><i class="o">globalDirectories</i><i class="p">: </i><i class="n">53</i><i class="c">, </i><i class="o">globalSymlinks</i><i class="p">: </i><i class="n">0</i><i class="c">, </i><i class="o">globalDeleted</i><i class="p">: </i><i class="n">283</i><i class="c">, </i><i class="o">globalBytes</i><i class="p">: </i><i class="n">13945803</i><i class="c">, </i><i class="o">globalTotalItems</i><i class="p">: </i><i class="n">644</i><i class="c">, </i><i class="o">localFiles</i><i class="p">: </i><i class="n">280</i><i class="c">, </i><i class="g">…</i><i class="o"> }</i></div><div class="lnk" style="top:5px"><b>syncthingController.js</b><u>:498:33</u></div></div><div class="abs row" style="top:525px;height:22px"><div class="msg" style="top:4px">recalcCompletion AL7CTQG-V6SA5MY-EEE32MH-QCGYXP3-AFNHMWK-WDZXVY3-SHEAKBB-M474KQ4 <span class="tw"></span><i class="o">Object { </i><i class="o">_total</i><i class="p">: </i><i class="n">100</i><i class="c">, </i><i class="o">_needBytes</i><i class="p">: </i><i class="n">0</i><i class="c">, </i><i class="o">_needItems</i><i class="p">: </i><i class="n">0</i><i class="c">, </i><i class="o">"g3y73-t7pkz"</i><i class="p">: </i><i class="o">{…}</i><i class="o"> }</i></div><div class="lnk" style="top:4px"><b>syncthingController.js</b><u>:680:21</u></div></div><div class="abs row" style="top:547px;height:23px"><div class="msg" style="top:5px">recalcCompletion T6H7VOP-R3MOXOJ-H4M7JPU-MPKM6MK-HDVKBU7-RCLST2T-DU34QBS-QJ23WAV <span class="tw"></span><i class="o">Object { </i><i class="o">_total</i><i class="p">: </i><i class="n">100</i><i class="c">, </i><i class="o">_needBytes</i><i class="p">: </i><i class="n">0</i><i class="c">, </i><i class="o">_needItems</i><i class="p">: </i><i class="n">0</i><i class="c">, </i><i class="o">"f612q-sdtgq"</i><i class="p">: </i><i class="o">{…}</i><i class="c">, </i><i class="o">"g3y73-t7pkz"</i><i class="p">: </i><i class="o">{…}</i><i class="o"> }</i></div><div class="lnk" style="top:5px"><b>syncthingController.js</b><u>:680:21</u></div></div><div class="abs row" style="top:570px;height:22px"><div class="msg" style="top:4px">recalcCompletion PDX7R6M-BRFDV3V-QFXZ557-VXWGGG6-YAOEZRN-4SH2RRC-XRUH7OG-BQCB6AP <span class="tw"></span><i class="o">Object { </i><i class="o">_total</i><i class="p">: </i><i class="n">100</i><i class="c">, </i><i class="o">_needBytes</i><i class="p">: </i><i class="n">0</i><i class="c">, </i><i class="o">_needItems</i><i class="p">: </i><i class="n">0</i><i class="c">, </i><i class="o">"f612q-sdtgq"</i><i class="p">: </i><i class="o">{…}</i><i class="c">, </i><i class="o">"mkcsp-zi6gq"</i><i class="p">: </i><i class="o">{…}</i><i class="o"> }</i></div><div class="lnk" style="top:4px"><b>syncthingController.js</b><u>:680:21</u></div></div><div class="abs row" style="top:592px;height:23px"><div class="msg" style="top:5px">refreshFolder mkcsp-zi6gq <span class="tw"></span><i class="o">Object { </i><i class="o">errors</i><i class="p">: </i><i class="n">0</i><i class="c">, </i><i class="o">pullErrors</i><i class="p">: </i><i class="n">0</i><i class="c">, </i><i class="o">invalid</i><i class="p">: </i><i class="s">""</i><i class="c">, </i><i class="o">globalFiles</i><i class="p">: </i><i class="n">54</i><i class="c">, </i><i class="o">globalDirectories</i><i class="p">: </i><i class="n">1</i><i class="c">, </i><i class="o">globalSymlinks</i><i class="p">: </i><i class="n">0</i><i class="c">, </i><i class="o">globalDeleted</i><i class="p">: </i><i class="n">38</i><i class="c">, </i><i class="o">globalBytes</i><i class="p">: </i><i class="n">24255539</i><i class="c">, </i><i class="o">globalTotalItems</i><i class="p">: </i><i class="n">93</i><i class="c">, </i><i class="o">localFiles</i><i class="p">: </i><i class="n">54</i><i class="c">, </i><i class="g">…</i><i class="o"> }</i></div><div class="lnk" style="top:5px"><b>syncthingController.js</b><u>:498:33</u></div></div><div class="abs row" style="top:615px;height:23px"><div class="msg" style="top:4px">recalcCompletion T6H7VOP-R3MOXOJ-H4M7JPU-MPKM6MK-HDVKBU7-RCLST2T-DU34QBS-QJ23WAV <span class="tw"></span><i class="o">Object { </i><i class="o">_total</i><i class="p">: </i><i class="n">100</i><i class="c">, </i><i class="o">_needBytes</i><i class="p">: </i><i class="n">0</i><i class="c">, </i><i class="o">_needItems</i><i class="p">: </i><i class="n">0</i><i class="c">, </i><i class="o">"f612q-sdtgq"</i><i class="p">: </i><i class="o">{…}</i><i class="c">, </i><i class="o">"g3y73-t7pkz"</i><i class="p">: </i><i class="o">{…}</i><i class="c">, </i><i class="o">"mkcsp-zi6gq"</i><i class="p">: </i><i class="o">{…}</i><i class="o"> }</i></div><div class="lnk" style="top:4px"><b>syncthingController.js</b><u>:680:21</u></div></div><div class="abs row" style="top:638px;height:22px"><div class="msg" style="top:4px">refreshFolder s7s5h-ya34z <span class="tw"></span><i class="o">Object { </i><i class="o">errors</i><i class="p">: </i><i class="n">0</i><i class="c">, </i><i class="o">pullErrors</i><i class="p">: </i><i class="n">0</i><i class="c">, </i><i class="o">invalid</i><i class="p">: </i><i class="s">""</i><i class="c">, </i><i class="o">globalFiles</i><i class="p">: </i><i class="n">9282</i><i class="c">, </i><i class="o">globalDirectories</i><i class="p">: </i><i class="n">1424</i><i class="c">, </i><i class="o">globalSymlinks</i><i class="p">: </i><i class="n">0</i><i class="c">, </i><i class="o">globalDeleted</i><i class="p">: </i><i class="n">14591</i><i class="c">, </i><i class="o">globalBytes</i><i class="p">: </i><i class="n">236490686</i><i class="c">, </i><i class="o">globalTotalItems</i><i class="p">: </i><i class="n">25297</i><i class="c">, </i><i class="o">localFiles</i><i class="p">: </i><i class="n">8904</i><i class="c">, </i><i class="g">…</i><i class="o"> }</i></div><div class="lnk" style="top:4px"><b>syncthingController.js</b><u>:498:33</u></div></div><div class="abs row" style="top:660px;height:23px"><div class="msg" style="top:5px">recalcCompletion PDX7R6M-BRFDV3V-QFXZ557-VXWGGG6-YAOEZRN-4SH2RRC-XRUH7OG-BQCB6AP <span class="tw"></span><i class="o">Object { </i><i class="o">_total</i><i class="p">: </i><i class="n">100</i><i class="c">, </i><i class="o">_needBytes</i><i class="p">: </i><i class="n">0</i><i class="c">, </i><i class="o">_needItems</i><i class="p">: </i><i class="n">0</i><i class="c">, </i><i class="o">"f612q-sdtgq"</i><i class="p">: </i><i class="o">{…}</i><i class="c">, </i><i class="o">"mkcsp-zi6gq"</i><i class="p">: </i><i class="o">{…}</i><i class="c">, </i><i class="o">"s7s5h-ya34z"</i><i class="p">: </i><i class="o">{…}</i><i class="o"> }</i></div><div class="lnk" style="top:5px"><b>syncthingController.js</b><u>:680:21</u></div></div><div class="abs row" style="top:683px;height:22px"><div class="msg" style="top:4px">recalcCompletion T6H7VOP-R3MOXOJ-H4M7JPU-MPKM6MK-HDVKBU7-RCLST2T-DU34QBS-QJ23WAV <span class="tw"></span><i class="o">Object { </i><i class="o">_total</i><i class="p">: </i><i class="n">100</i><i class="c">, </i><i class="o">_needBytes</i><i class="p">: </i><i class="n">0</i><i class="c">, </i><i class="o">_needItems</i><i class="p">: </i><i class="n">0</i><i class="c">, </i><i class="o">"f612q-sdtgq"</i><i class="p">: </i><i class="o">{…}</i><i class="c">, </i><i class="o">"g3y73-t7pkz"</i><i class="p">: </i><i class="o">{…}</i><i class="c">, </i><i class="o">"mkcsp-zi6gq"</i><i class="p">: </i><i class="o">{…}</i><i class="c">, </i><i class="o">"s7s5h-ya34z"</i><i class="p">: </i><i class="o">{…}</i><i class="o"> }</i></div><div class="lnk" style="top:4px"><b>syncthingController.js</b><u>:680:21</u></div></div><div class="abs row" style="top:705px;height:21px"><div class="msg" style="top:5px">refreshCompletion: folder is paused</div><div class="lnk" style="top:5px"><b>syncthingController.js</b><u>:696:29</u></div></div><div class="abs row" style="top:726px;height:21px"><div class="msg" style="top:5px">refreshCompletion: folder is paused</div><div class="lnk" style="top:5px"><b>syncthingController.js</b><u>:696:29</u></div></div><div class="abs row" style="top:747px;height:23px"><div class="msg" style="top:5px">refreshDiscoveryCache <span class="tw"></span><i class="o">Object { </i><i class="o">"AL7CTQG-V6SA5MY-EEE32MH-QCGYXP3-AFNHMWK-WDZXVY3-SHEAKBB-M474KQ4"</i><i class="p">: </i><i class="o">{…}</i><i class="c">, </i><i class="o">"PDX7R6M-BRFDV3V-QFXZ557-VXWGGG6-YAOEZRN-4SH2RRC-XRUH7OG-BQCB6AP"</i><i class="p">: </i><i class="o">{…}</i><i class="o"> }</i></div><div class="lnk" style="top:5px"><b>syncthingController.js</b><u>:634:25</u></div></div><div class="abs row" style="top:770px;height:22px"><div class="msg" style="top:4px">refreshConnections <span class="tw"></span><i class="o">Object { </i><i class="o">"AL7CTQG-V6SA5MY-EEE32MH-QCGYXP3-AFNHMWK-WDZXVY3-SHEAKBB-M474KQ4"</i><i class="p">: </i><i class="o">{…}</i><i class="c">, </i><i class="o">"PDX7R6M-BRFDV3V-QFXZ557-VXWGGG6-YAOEZRN-4SH2RRC-XRUH7OG-BQCB6AP"</i><i class="p">: </i><i class="o">{…}</i><i class="o"> }</i></div><div class="lnk" style="top:4px"><b>syncthingController.js</b><u>:734:25</u></div></div><div class="abs row" style="top:792px;height:23px"><div class="msg" style="top:5px">refreshErrors <span class="tw"></span><i class="o">Object { </i><i class="o">errors</i><i class="p">: </i><i class="g">null</i><i class="o"> }</i></div><div class="lnk" style="top:5px"><b>syncthingController.js</b><u>:741:25</u></div></div><div id="input" class="abs"><svg class="abs" style="left:10px;top:6px" width="14" height="13" viewBox="0 0 14 13"><path d="M2.5 1.5l4.5 5-4.5 5M7.5 1.5l4.5 5-4.5 5" fill="none" stroke="#8f8f91" stroke-width="1.6"/></svg><svg class="abs" style="left:1897px;top:2px" width="23" height="19" viewBox="0 0 23 19"><rect x="3" y="3.7" width="14" height="12.3" rx="2.3" fill="none" stroke="#c8c8ca" stroke-width="2"/><path d="M9.6 3.7v12.3" stroke="#c8c8ca" stroke-width="1.2"/><path d="M5.3 6.4h2.6M5.3 8.5h2.6M5.8 10.5h2" stroke="#c8c8ca" stroke-width="1.1" stroke-linecap="round"/><circle cx="17" cy="3.9" r="3" fill="#00b3f4"/></svg></div></body></html>
